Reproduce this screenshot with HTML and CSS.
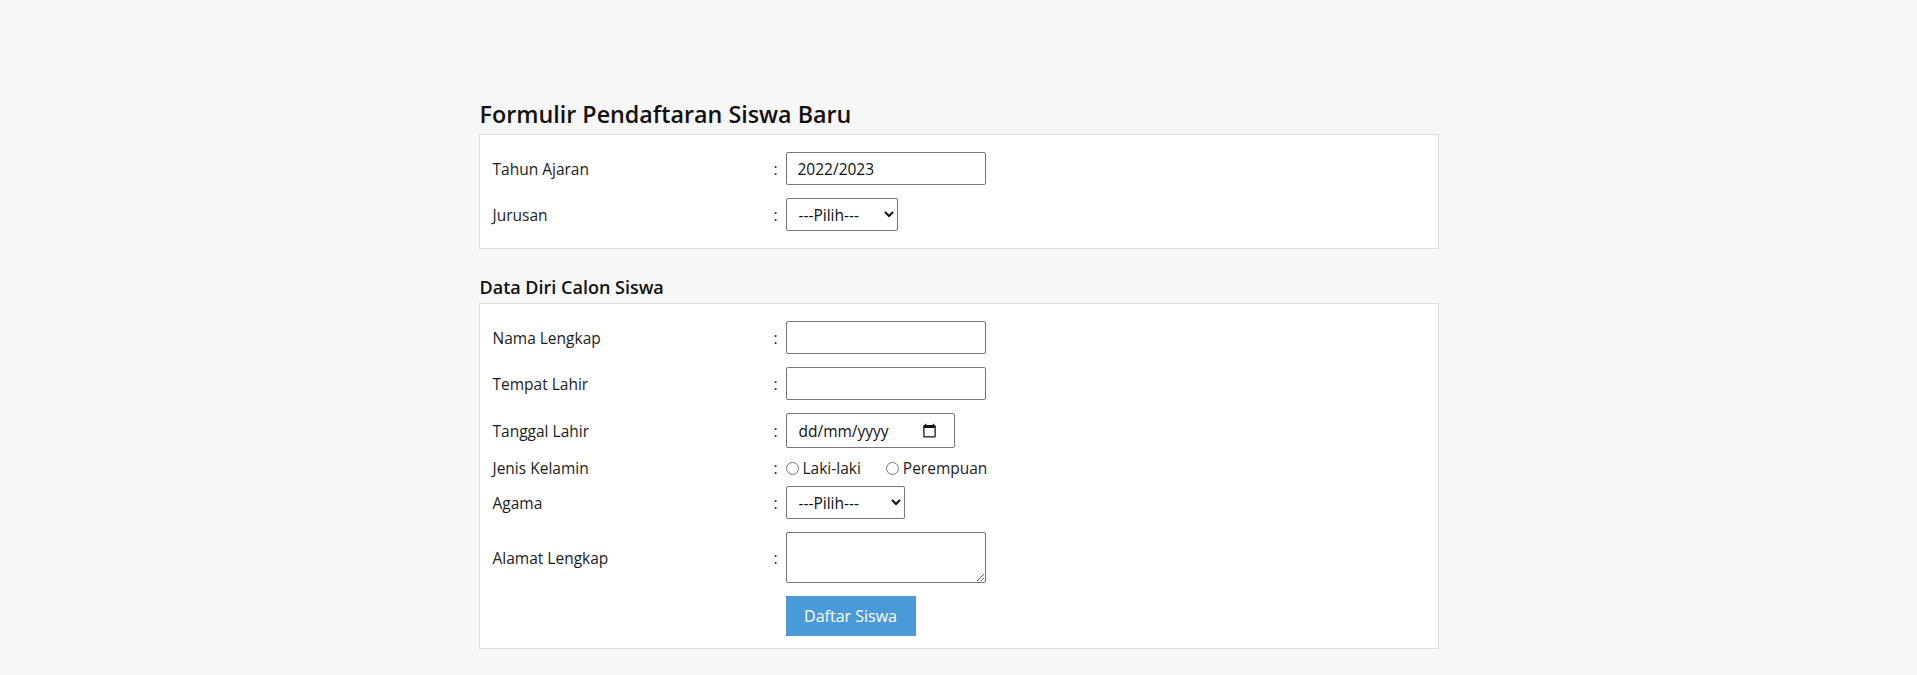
FILE: index.html
```html
<!DOCTYPE html>
<html lang="id">
<head>
<meta charset="utf-8">
<title>Formulir Pendaftaran Siswa Baru</title>
<link rel="stylesheet" href="styles.css">
</head>
<body>
<main class="container">
  <h1 class="page-title">Formulir Pendaftaran Siswa Baru</h1>
  <section class="card">
    <div class="row">
      <label class="row-label" for="tahun">Tahun Ajaran</label>
      <span class="colon">:</span>
      <div class="row-field"><input id="tahun" class="field field-text" type="text" value="2022/2023"></div>
    </div>
    <div class="row">
      <label class="row-label" for="jurusan">Jurusan</label>
      <span class="colon">:</span>
      <div class="row-field">
        <select id="jurusan" class="field field-select field-select-jurusan">
          <option>---Pilih---</option>
        </select>
      </div>
    </div>
  </section>

  <h2 class="section-title">Data Diri Calon Siswa</h2>
  <section class="card card-last">
    <div class="row">
      <label class="row-label" for="nama">Nama Lengkap</label>
      <span class="colon">:</span>
      <div class="row-field"><input id="nama" class="field field-text" type="text"></div>
    </div>
    <div class="row">
      <label class="row-label" for="tempat">Tempat Lahir</label>
      <span class="colon">:</span>
      <div class="row-field"><input id="tempat" class="field field-text" type="text"></div>
    </div>
    <div class="row">
      <label class="row-label" for="tanggal">Tanggal Lahir</label>
      <span class="colon">:</span>
      <div class="row-field">
        <div class="field field-date">
          <input id="tanggal" class="date-input" type="text" placeholder="dd/mm/yyyy">
          <svg class="date-icon" viewBox="0 0 24 24" width="15" height="15" aria-hidden="true">
            <path d="M20 3h-1V1h-2v2H7V1H5v2H4c-1.1 0-2 .9-2 2v16c0 1.1.9 2 2 2h16c1.1 0 2-.9 2-2V5c0-1.1-.9-2-2-2zm0 18H4V8h16v13z" fill="#111"/>
          </svg>
        </div>
      </div>
    </div>
    <div class="row row-radio">
      <span class="row-label">Jenis Kelamin</span>
      <span class="colon">:</span>
      <div class="row-field radio-group">
        <label class="radio-option"><input class="radio" type="radio" name="jk" value="L">Laki-laki</label>
        <label class="radio-option"><input class="radio" type="radio" name="jk" value="P">Perempuan</label>
      </div>
    </div>
    <div class="row">
      <label class="row-label" for="agama">Agama</label>
      <span class="colon">:</span>
      <div class="row-field">
        <select id="agama" class="field field-select field-select-agama">
          <option>---Pilih---</option>
        </select>
      </div>
    </div>
    <div class="row">
      <label class="row-label" for="alamat">Alamat Lengkap</label>
      <span class="colon">:</span>
      <div class="row-field"><textarea id="alamat" class="field field-textarea"></textarea></div>
    </div>
    <div class="row">
      <span class="row-label"></span>
      <span class="colon"></span>
      <div class="row-field"><button class="btn-submit" type="submit">Daftar Siswa</button></div>
    </div>
  </section>
</main>
</body>
</html>
```

FILE: styles.css
```css
* {
  box-sizing: border-box;
}

body {
  margin: 0;
  background: #f7f7f7;
  font-family: "Open Sans", "Noto Sans", sans-serif;
  color: #1c1c1c;
}

.container {
  width: 960px;
  margin: 0 auto;
  padding-top: 99px;
  padding-bottom: 25px;
}

.page-title {
  margin: 0 0 5px 1px;
  font-size: 23.3px;
  line-height: 30px;
  font-weight: 600;
  color: #111;
}

.section-title {
  margin: 26px 0 4px 1px;
  font-size: 18px;
  line-height: 24px;
  font-weight: 600;
  color: #111;
}

.card {
  background: #fff;
  border: 1px solid #dcdcdc;
  padding: 17px 13px;
  display: flex;
  flex-direction: column;
  gap: 13px;
}

.card-last {
  padding-bottom: 12px;
}

.row {
  display: grid;
  grid-template-columns: 281px 12px 1fr;
  align-items: center;
  font-size: 15.5px;
}

.row-radio {
  margin: -4px 0;
  height: 20px;
}

.row-label {
  color: #1c1c1c;
}

.colon {
  color: #1c1c1c;
}

.row-field {
  display: flex;
  align-items: center;
}

.field {
  font-family: inherit;
  font-size: 15.5px;
  color: #111;
  border: 1px solid #767676;
  border-radius: 2px;
  background: #fff;
  margin: 0;
}

.field-text {
  width: 200px;
  height: 33px;
  padding: 0 11px;
}

.field-date {
  width: 169px;
  height: 35px;
  padding: 0 17px 0 12px;
  display: flex;
  align-items: center;
  gap: 4px;
}

.date-input {
  flex: 1;
  min-width: 0;
  border: none;
  outline: none;
  padding: 0;
  font-family: inherit;
  font-size: 15.5px;
  color: #111;
  background: transparent;
}

.date-input::placeholder {
  color: #111;
  opacity: 1;
}

.date-icon {
  flex: none;
  display: block;
}

.field-select {
  height: 33px;
  padding: 0 4px 0 8px;
}

.field-select-jurusan {
  width: 112px;
}

.field-select-agama {
  width: 119px;
}

.field-textarea {
  width: 200px;
  height: 51px;
  padding: 4px 8px;
  resize: vertical;
}

.radio-option {
  display: inline-flex;
  align-items: center;
  margin-right: 25px;
}

.radio {
  margin: 0 4px 0 0;
  width: 13px;
  height: 13px;
}

.btn-submit {
  width: 130px;
  height: 40px;
  border: none;
  background: #4b9ad8;
  color: #fff;
  font-family: inherit;
  font-size: 16px;
  font-weight: 500;
  cursor: pointer;
}
```
